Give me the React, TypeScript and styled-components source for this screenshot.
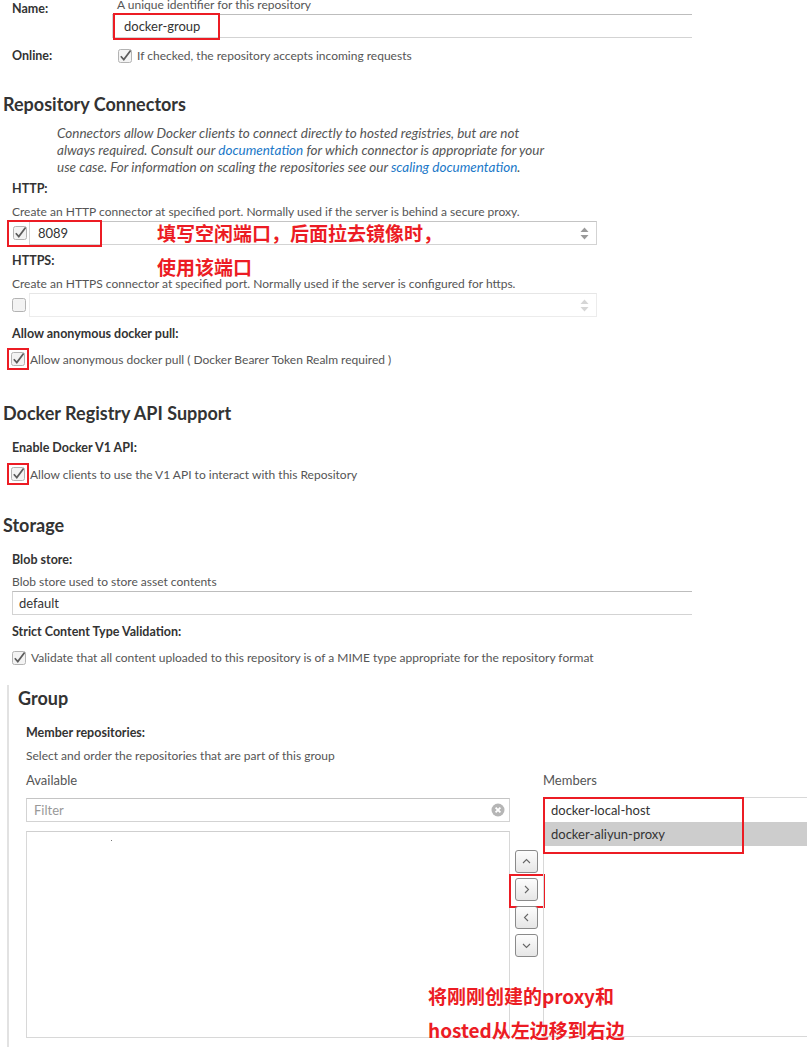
import styled, { createGlobalStyle } from "styled-components"

const GlobalStyle = createGlobalStyle`
    html, body {
        margin: 0;
        padding: 0;
        background: #fff;
        overflow: hidden;
    }
    body {
        font-family: Lato, "Open Sans", "Liberation Sans", sans-serif;
        color: #444;
    }
`

const RED = "#ec1c24"

const Page = styled.div`
    position: relative;
    width: 807px;
    height: 1052px;
    overflow: hidden;
`

const FieldRow = styled.div<{ $top: number }>`
    display: grid;
    grid-template-columns: 100px 580px;
    padding-left: 12px;
    margin-top: ${p => p.$top}px;
`

const SideLabel = styled.div<{ $pt?: number }>`
    font-size: 12.5px;
    font-weight: 700;
    line-height: 15px;
    color: #333;
    padding-top: ${p => p.$pt ?? 0}px;
`

const Hint = styled.div<{ $indent?: number; $top?: number }>`
    font-size: 12px;
    line-height: 15px;
    color: #555;
    margin-top: ${p => p.$top ?? 0}px;
    padding-left: ${p => p.$indent ?? 0}px;
`

const TextBox = styled.div<{ $width: number; $pad: number; $top?: number }>`
    position: relative;
    box-sizing: border-box;
    width: ${p => p.$width}px;
    height: 24px;
    margin-top: ${p => p.$top ?? 0}px;
    padding-left: ${p => p.$pad}px;
    border: 1px solid #d3d3d3;
    border-top-color: #bdbdbd;
    border-right: none;
    font-size: 13px;
    line-height: 22px;
    color: #333;
`

const Callout = styled.div<{ $left: number; $top: number; $w: number; $h: number }>`
    position: absolute;
    left: ${p => p.$left}px;
    top: ${p => p.$top}px;
    width: ${p => p.$w}px;
    height: ${p => p.$h}px;
    box-sizing: border-box;
    border: 2px solid ${RED};
    pointer-events: none;
`

const CheckLine = styled.div<{ $top: number; $indent?: number }>`
    display: flex;
    align-items: center;
    gap: 5px;
    margin-top: ${p => p.$top}px;
    padding-left: ${p => p.$indent ?? 0}px;
    font-size: 12px;
    line-height: 15px;
    color: #555;
`

const CheckMark = styled.span<{ $marked?: boolean }>`
    display: inline-flex;
    flex: none;
    box-sizing: border-box;
    padding: ${p => (p.$marked ? "2px" : "0")};
    border: ${p => (p.$marked ? `2px solid ${RED}` : "none")};
    margin-left: ${p => (p.$marked ? "-5px" : "0")};
    margin-right: ${p => (p.$marked ? "-4px" : "0")};
`

const Heading = styled.h2<{ $top: number; $left?: number }>`
    margin: ${p => p.$top}px 0 0 ${p => p.$left ?? 3}px;
    font-size: 18px;
    font-weight: 700;
    line-height: 20px;
    color: #333;
`

const Section = styled.div`
    padding-left: 12px;
`

const Label = styled.div<{ $top: number }>`
    margin-top: ${p => p.$top}px;
    font-size: 12.5px;
    font-weight: 700;
    line-height: 15px;
    color: #333;
`

const Intro = styled.p`
    margin: 11px 0 0 57px;
    font-size: 13.5px;
    font-style: italic;
    line-height: 17px;
    color: #555;
`

const DocLink = styled.span`
    color: #1a78c8;
`

const PortRow = styled.div<{ $top: number }>`
    position: relative;
    display: flex;
    align-items: center;
    gap: 2px;
    height: 24px;
    margin-top: ${p => p.$top}px;
`

const BoxSlot = styled.span<{ $shift?: number }>`
    display: flex;
    margin-left: ${p => p.$shift ?? 0}px;
    margin-right: ${p => (p.$shift ? 0 : 1)}px;
`

const PortBox = styled.div<{ $disabled?: boolean }>`
    display: flex;
    align-items: center;
    justify-content: space-between;
    box-sizing: border-box;
    width: 568px;
    height: 24px;
    padding: 0 7px 0 8px;
    border: 1px solid ${p => (p.$disabled ? "#ececec" : "#d3d3d3")};
    border-top-color: ${p => (p.$disabled ? "#e6e6e6" : "#c4c4c4")};
    font-size: 13px;
    color: #333;
`

const Note = styled.div<{ $left: number; $top: number }>`
    position: absolute;
    left: ${p => p.$left}px;
    top: ${p => p.$top}px;
    font-family: "Noto Sans CJK SC", "Microsoft YaHei", sans-serif;
    font-size: 19px;
    font-weight: 700;
    line-height: 34px;
    color: ${RED};
    white-space: nowrap;
`

const GroupPanel = styled.div`
    margin: 20px 0 0 7px;
    padding: 3px 0 9px 9px;
    border-left: 2px solid #e2e2e2;
`

const GroupBody = styled.div`
    padding-left: 8px;
`

const DualList = styled.div`
    display: grid;
    grid-template-columns: 484px 33px 300px;
    margin-top: 10px;
`

const ListTitle = styled.div`
    font-size: 13px;
    line-height: 15px;
    color: #555;
    height: 25px;
`

const FilterBox = styled.div`
    display: flex;
    align-items: center;
    justify-content: space-between;
    box-sizing: border-box;
    height: 24px;
    padding: 0 4px 0 7px;
    border: 1px solid #d3d3d3;
    border-top-color: #c4c4c4;
    font-size: 13px;
    color: #999;
`

const AvailableList = styled.div`
    position: relative;
    box-sizing: border-box;
    height: 207px;
    margin-top: 9px;
    border: 1px solid #d8d8d8;
    border-top-color: #cfcfcf;
`

const Speck = styled.span`
    position: absolute;
    left: 84px;
    top: 8px;
    width: 1px;
    height: 1px;
    background: #777;
`

const Buttons = styled.div`
    display: flex;
    flex-direction: column;
    gap: 5px;
    padding: 77px 0 0 5px;
`

const MoveButton = styled.button<{ $marked?: boolean }>`
    position: relative;
    display: flex;
    align-items: center;
    justify-content: center;
    box-sizing: border-box;
    width: 23px;
    height: 23px;
    padding: 0;
    border: 1px solid #8a8a8a;
    border-radius: 3px;
    background: linear-gradient(#fdfdfd, #e6e6e6);

    &::after {
        content: "";
        display: ${p => (p.$marked ? "block" : "none")};
        position: absolute;
        left: -7px;
        top: -5px;
        width: 36px;
        height: 34px;
        box-sizing: border-box;
        border: 2px solid ${RED};
    }
`

const MembersList = styled.div`
    position: relative;
    box-sizing: border-box;
    height: 240px;
    margin-top: -1px;
    border-top: 1px solid #d8d8d8;
    border-left: 1px solid #d8d8d8;
    border-bottom: 1px solid #d8d8d8;
`

const MemberItem = styled.div<{ $selected?: boolean }>`
    height: 24px;
    padding-left: 7px;
    font-size: 13px;
    line-height: 24px;
    color: #333;
    background: ${p => (p.$selected ? "#cdcdcd" : "transparent")};
`

function Checkbox({ checked = true }: { checked?: boolean }) {
    return (
        <svg width="14" height="14" viewBox="0 0 14 14">
            <rect x="0.5" y="0.5" width="13" height="13" rx="2" fill="#f3f3f3" stroke="#b3b3b3" />
            {checked && (
                <path d="M2.8 7.2 L5.8 10.6 L12.6 1.4" fill="none" stroke="#5c5c5c" strokeWidth="1.7" />
            )}
        </svg>
    )
}

function Spinner({ disabled }: { disabled?: boolean }) {
    const c = disabled ? "#d6d6d6" : "#9a9a9a"
    return (
        <svg width="9" height="13" viewBox="0 0 9 13">
            <polygon points="0.5,5 4.5,0.5 8.5,5" fill={c} />
            <polygon points="0.5,8 4.5,12.5 8.5,8" fill={c} />
        </svg>
    )
}

function ClearIcon() {
    return (
        <svg width="14" height="14" viewBox="0 0 14 14">
            <circle cx="7" cy="7" r="6.5" fill="#b5b5b5" />
            <path d="M4.6 4.6 L9.4 9.4 M9.4 4.6 L4.6 9.4" stroke="#fff" strokeWidth="1.8" />
        </svg>
    )
}

function Chevron({ dir }: { dir: "up" | "right" | "left" | "down" }) {
    const d = {
        up: "M1 6 L4.5 2.5 L8 6",
        down: "M1 3 L4.5 6.5 L8 3",
        right: "M3 1 L6.5 4.5 L3 8",
        left: "M6 1 L2.5 4.5 L6 8",
    }[dir]
    return (
        <svg width="9" height="9" viewBox="0 0 9 9">
            <path d={d} fill="none" stroke="#666" strokeWidth="1.1" />
        </svg>
    )
}

export default function App() {
    return (
        <Page>
            <GlobalStyle />

            <FieldRow $top={-3}>
                <SideLabel $pt={4}>Name:</SideLabel>
                <div>
                    <Hint $indent={5}>A unique identifier for this repository</Hint>
                    <TextBox $width={580} $pad={11} $top={2}>
                        docker-group
                        <Callout $left={0} $top={-2} $w={107} $h={27} />
                    </TextBox>
                </div>
            </FieldRow>

            <FieldRow $top={10}>
                <SideLabel>Online:</SideLabel>
                <CheckLine $top={0} $indent={6}>
                    <Checkbox />
                    If checked, the repository accepts incoming requests
                </CheckLine>
            </FieldRow>

            <Heading $top={31}>Repository Connectors</Heading>
            <Intro>
                Connectors allow Docker clients to connect directly to hosted registries, but are not
                <br />
                always required. Consult our <DocLink>documentation</DocLink> for which connector is appropriate for your
                <br />
                use case. For information on scaling the repositories see our <DocLink>scaling documentation</DocLink>.
            </Intro>

            <Section>
                <Label $top={5}>HTTP:</Label>
                <Hint $top={8}>
                    Create an HTTP connector at specified port. Normally used if the server is behind a secure proxy.
                </Hint>
                <PortRow $top={2}>
                    <BoxSlot $shift={1}>
                        <Checkbox />
                    </BoxSlot>
                    <PortBox>
                        8089
                        <Spinner />
                    </PortBox>
                    <Callout $left={-5} $top={-1} $w={95} $h={27} />
                </PortRow>

                <Label $top={8}>HTTPS:</Label>
                <Hint $top={8}>
                    Create an HTTPS connector at specified port. Normally used if the server is configured for https.
                </Hint>
                <PortRow $top={2}>
                    <BoxSlot>
                        <Checkbox checked={false} />
                    </BoxSlot>
                    <PortBox $disabled>
                        <span />
                        <Spinner disabled />
                    </PortBox>
                </PortRow>

                <Label $top={9}>Allow anonymous docker pull:</Label>
                <CheckLine $top={7}>
                    <CheckMark $marked>
                        <Checkbox />
                    </CheckMark>
                    Allow anonymous docker pull ( Docker Bearer Token Realm required )
                </CheckLine>
            </Section>

            <Heading $top={33}>Docker Registry API Support</Heading>
            <Section>
                <Label $top={17}>Enable Docker V1 API:</Label>
                <CheckLine $top={8}>
                    <CheckMark $marked>
                        <Checkbox />
                    </CheckMark>
                    Allow clients to use the V1 API to interact with this Repository
                </CheckLine>
            </Section>

            <Heading $top={30}>Storage</Heading>
            <Section>
                <Label $top={17}>Blob store:</Label>
                <Hint $top={7}>Blob store used to store asset contents</Hint>
                <TextBox $width={680} $pad={6} $top={2}>
                    default
                </TextBox>
                <Label $top={9}>Strict Content Type Validation:</Label>
                <CheckLine $top={11}>
                    <Checkbox />
                    Validate that all content uploaded to this repository is of a MIME type appropriate for the repository format
                </CheckLine>
            </Section>

            <GroupPanel>
                <Heading $top={0} $left={0}>Group</Heading>
                <GroupBody>
                    <Label $top={17}>Member repositories:</Label>
                    <Hint $top={8}>Select and order the repositories that are part of this group</Hint>
                    <DualList>
                        <div>
                            <ListTitle>Available</ListTitle>
                            <FilterBox>
                                Filter
                                <ClearIcon />
                            </FilterBox>
                            <AvailableList>
                                <Speck />
                            </AvailableList>
                        </div>
                        <Buttons>
                            <MoveButton>
                                <Chevron dir="up" />
                            </MoveButton>
                            <MoveButton $marked>
                                <Chevron dir="right" />
                            </MoveButton>
                            <MoveButton>
                                <Chevron dir="left" />
                            </MoveButton>
                            <MoveButton>
                                <Chevron dir="down" />
                            </MoveButton>
                        </Buttons>
                        <div>
                            <ListTitle>Members</ListTitle>
                            <MembersList>
                                <MemberItem>docker-local-host</MemberItem>
                                <MemberItem $selected>docker-aliyun-proxy</MemberItem>
                                <Callout $left={-1} $top={-1} $w={201} $h={57} />
                            </MembersList>
                        </div>
                    </DualList>
                </GroupBody>
            </GroupPanel>

            <Note $left={157} $top={216}>
                填写空闲端口，后面拉去镜像时，
                <br />
                使用该端口
            </Note>
            <Note $left={428} $top={979}>
                将刚刚创建的proxy和
                <br />
                hosted从左边移到右边
            </Note>
        </Page>
    )
}
